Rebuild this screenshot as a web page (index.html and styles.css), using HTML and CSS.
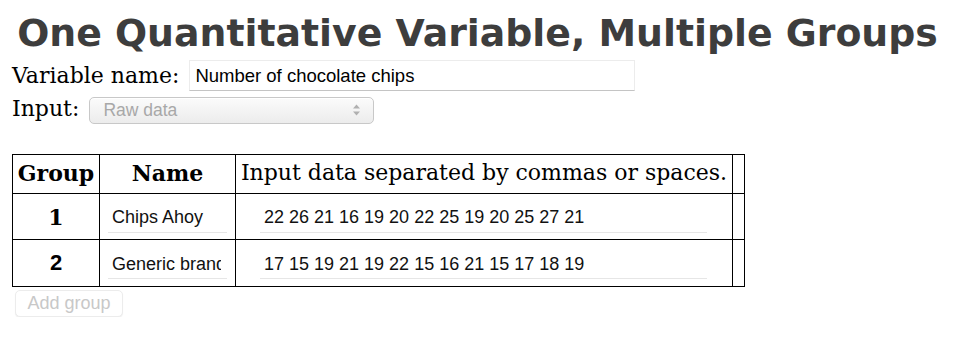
FILE: index.html
```html
<!DOCTYPE html>
<html>
<head>
<meta charset="utf-8">
<link rel="stylesheet" href="styles.css">
</head>
<body>
<h1 class="title">One Quantitative Variable, Multiple Groups</h1>
<div class="row">
  <label class="lbl">Variable name:</label>
  <input class="varname" type="text" value="Number of chocolate chips">
</div>
<div class="row row-input">
  <label class="lbl">Input:</label>
  <div class="select">
    <span class="select-text">Raw data</span>
    <svg class="arrows" width="9" height="14" viewBox="0 0 9 14"><path d="M4.5 1.5 L8 5.5 L1 5.5 Z" fill="#b0b0b0"/><path d="M4.5 12.5 L8 8.5 L1 8.5 Z" fill="#b0b0b0"/></svg>
  </div>
</div>
<table class="groups">
  <tr class="head">
    <th class="c-group">Group</th>
    <th class="c-name">Name</th>
    <th class="c-data">Input data separated by commas or spaces.</th>
    <th class="c-extra"></th>
  </tr>
  <tr>
    <td class="num">1</td>
    <td class="namecell"><input class="line name-in" type="text" value="Chips Ahoy"></td>
    <td class="datacell"><input class="line data-in" type="text" value="22 26 21 16 19 20 22 25 19 20 25 27 21"></td>
    <td></td>
  </tr>
  <tr class="last">
    <td class="num num2">2</td>
    <td class="namecell"><input class="line name-in" type="text" value="Generic brand"></td>
    <td class="datacell"><input class="line data-in" type="text" value="17 15 19 21 19 22 15 16 21 15 17 18 19"></td>
    <td></td>
  </tr>
</table>
<button class="add" disabled>Add group</button>
</body>
</html>
```
FILE: styles.css
```css
html, body {
  margin: 0;
  padding: 0;
  background: #fff;
}
body {
  padding: 0 12px;
  font-family: "DejaVu Serif", "Liberation Serif", serif;
  color: #000;
}
.title {
  margin: 0;
  padding: 11px 5px 0 0;
  height: 47px;
  text-align: center;
  font-family: "DejaVu Sans", sans-serif;
  font-weight: bold;
  font-size: 37.8px;
  line-height: 44px;
  color: #3d3d3d;
  white-space: nowrap;
}
.row {
  display: flex;
  align-items: center;
  height: 34px;
}
.row-input {
  height: 32px;
}
.lbl {
  font-family: "DejaVu Serif", serif;
  font-size: 22px;
  margin-right: 10px;
}
.varname {
  box-sizing: border-box;
  width: 446px;
  height: 31px;
  border: 1px solid #ececec;
  border-bottom: 1px solid #c4c4c4;
  padding: 2px 5px 0;
  font-family: "Liberation Sans", Arial, sans-serif;
  font-size: 18.5px;
  color: #000;
  outline: none;
}
.select {
  box-sizing: border-box;
  width: 285px;
  height: 27px;
  margin-top: 4px;
  border: 1px solid #c8c8c8;
  border-radius: 5px;
  background: linear-gradient(#fbfbfb, #ececec);
  display: flex;
  align-items: center;
  justify-content: space-between;
  padding: 0 12px 0 13px;
  box-shadow: inset 0 1px 0 #fff;
}
.select-text {
  font-family: "Liberation Sans", Arial, sans-serif;
  font-size: 17.5px;
  color: #a8a8a8;
}
.groups {
  margin-top: 30px;
  border-collapse: collapse;
  border: 1px solid #000;
}
.groups th, .groups td {
  border: 1px solid #000;
  padding: 0;
}
.groups th {
  height: 35px;
  padding-bottom: 3px;
  font-family: "DejaVu Serif", serif;
  font-size: 22px;
}
.c-group { width: 86px; font-weight: bold; }
.c-name { width: 135px; font-weight: bold; }
.c-data { width: 496px; font-weight: normal; }
.c-extra { width: 11px; }
.groups td {
  height: 45px;
}
.groups tr.last td {
  height: 46px;
}
.num {
  text-align: center;
  font-family: "DejaVu Serif", serif;
  font-weight: bold;
  font-size: 22px;
}
.num2 {
  font-family: "Liberation Sans", Arial, sans-serif;
  font-size: 22px;
}
.namecell {
  padding: 0 8px !important;
}
.datacell {
  padding: 0 25px 0 24px !important;
}
.line {
  box-sizing: border-box;
  width: 100%;
  height: 31px;
  border: none;
  border-bottom: 1px solid #e6e6e6;
  padding: 2px 6px 0 4px;
  margin-top: 1px;
  font-family: "Liberation Sans", Arial, sans-serif;
  font-size: 18px;
  color: #111;
  outline: none;
  background: #fff;
}
.add {
  display: block;
  margin: 3px 0 0 3px;
  box-sizing: border-box;
  width: 108px;
  height: 27px;
  border: 1px solid #ececec;
  border-radius: 5px;
  background: #fff;
  font-family: "Liberation Sans", Arial, sans-serif;
  font-size: 18px;
  color: #c8c8c8;
  box-shadow: 0 1px 1px #eee;
}
```
